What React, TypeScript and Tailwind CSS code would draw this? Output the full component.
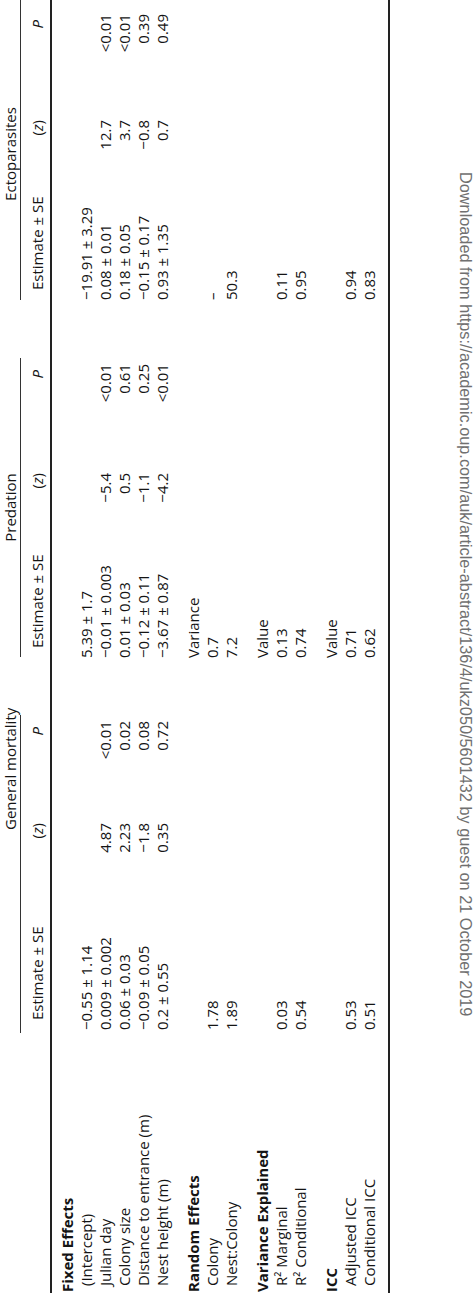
import React from "react";

type Cells = [string, string, string];
type Line = { label: string; head?: boolean; gm?: Cells; pr?: Cells; ec?: Cells; first?: boolean };

const e: Cells = ["", "", ""];

const lines: Line[] = [
  { label: "Fixed Effects", head: true, first: true },
  { label: "(Intercept)", gm: ["−0.55 ± 1.14", "", ""], pr: ["5.39 ± 1.7", "", ""], ec: ["−19.91 ± 3.29", "", ""] },
  { label: "Julian day", gm: ["0.009 ± 0.002", "4.87", "<0.01"], pr: ["−0.01 ± 0.003", "−5.4", "<0.01"], ec: ["0.08 ± 0.01", "12.7", "<0.01"] },
  { label: "Colony size", gm: ["0.06 ± 0.03", "2.23", "0.02"], pr: ["0.01 ± 0.03", "0.5", "0.61"], ec: ["0.18 ± 0.05", "3.7", "<0.01"] },
  { label: "Distance to entrance (m)", gm: ["−0.09 ± 0.05", "−1.8", "0.08"], pr: ["−0.12 ± 0.11", "−1.1", "0.25"], ec: ["−0.15 ± 0.17", "−0.8", "0.39"] },
  { label: "Nest height (m)", gm: ["0.2 ± 0.55", "0.35", "0.72"], pr: ["−3.67 ± 0.87", "−4.2", "<0.01"], ec: ["0.93 ± 1.35", "0.7", "0.49"] },
  { label: "Random Effects", head: true, pr: ["Variance", "", ""] },
  { label: "Colony", gm: ["1.78", "", ""], pr: ["0.7", "", ""], ec: ["–", "", ""] },
  { label: "Nest:Colony", gm: ["1.89", "", ""], pr: ["7.2", "", ""], ec: ["50.3", "", ""] },
  { label: "Variance Explained", head: true, pr: ["Value", "", ""] },
  { label: "R² Marginal", gm: ["0.03", "", ""], pr: ["0.13", "", ""], ec: ["0.11", "", ""] },
  { label: "R² Conditional", gm: ["0.54", "", ""], pr: ["0.74", "", ""], ec: ["0.95", "", ""] },
  { label: "ICC", head: true, pr: ["Value", "", ""] },
  { label: "Adjusted ICC", gm: ["0.53", "", ""], pr: ["0.71", "", ""], ec: ["0.94", "", ""] },
  { label: "Conditional ICC", gm: ["0.51", "", ""], pr: ["0.62", "", ""], ec: ["0.83", "", ""] },
];

const grid =
  "grid grid-cols-[263px_137px_70px_108px_57px_125px_60px_115px_58px_117px_63px_112px_8px]";

function Group({ c }: { c: Cells }) {
  return (
    <>
      <div className="whitespace-nowrap">{c[0]}</div>
      <div className="text-right whitespace-nowrap">{c[1]}</div>
      <div className="pr-[6px] text-right whitespace-nowrap">{c[2]}</div>
    </>
  );
}

function BodyRow({ l }: { l: Line }) {
  return (
    <div className={`${grid} h-[19px] leading-[19px] ${l.head && !l.first ? "mt-[12px]" : ""}`}>
      <div className={`whitespace-nowrap ${l.head ? "pl-[1px] font-bold" : "pl-[7px]"}`}>{l.label}</div>
      <Group c={l.gm ?? e} />
      <div />
      <Group c={l.pr ?? e} />
      <div />
      <Group c={l.ec ?? e} />
      <div />
    </div>
  );
}

function ColHeads() {
  return (
    <>
      <div className="pl-[10px] whitespace-nowrap">Estimate ± SE</div>
      <div className="text-right whitespace-nowrap">
        (<span className="italic">z</span>)
      </div>
      <div className="pr-[12px] text-right italic">P</div>
    </>
  );
}

export default function App() {
  return (
    <div className="flex h-[1293px] w-[474px] overflow-hidden bg-white">
      <div className="h-[1293px] w-[391px] shrink-0 overflow-hidden">
        <div className="w-[1293px] origin-top-left -rotate-90 translate-y-[1293px] text-[15px] text-[#141414] [font-family:'Open_Sans',sans-serif]">
          <div className={`${grid} h-[21px] grid-rows-[21px] leading-[20px]`}>
            <div />
            <div className="col-span-3 ml-[-3px] border-b border-[#333] pl-[203px] text-left whitespace-nowrap">
              General mortality
            </div>
            <div />
            <div className="col-span-3 ml-[1px] border-b border-[#333] text-center whitespace-nowrap">Predation</div>
            <div />
            <div className="col-span-4 border-b border-[#333] pr-[8px] text-center whitespace-nowrap">Ectoparasites</div>
          </div>
          <div className={`${grid} h-[29px] grid-rows-[29px] pt-[7px] leading-[19px]`}>
            <div />
            <ColHeads />
            <div />
            <ColHeads />
            <div />
            <ColHeads />
            <div />
          </div>
          <div className="h-[1.5px] bg-[#222]" />
          <div className="pt-[6px] pb-[9px]">
            {lines.map((l) => (
              <BodyRow key={l.label} l={l} />
            ))}
          </div>
          <div className="h-[2px] bg-[#222]" />
        </div>
      </div>
      <div className="flex h-[1293px] flex-1 justify-end pt-[172px] pr-[1px]">
        <div className="text-[16.3px] leading-[14px] text-[#707070] [writing-mode:vertical-rl] [font-family:'Liberation_Sans',Arial,sans-serif]">
          Downloaded from https://academic.oup.com/auk/article-abstract/136/4/ukz050/5601432 by guest on 21 October 2019
        </div>
      </div>
    </div>
  );
}
